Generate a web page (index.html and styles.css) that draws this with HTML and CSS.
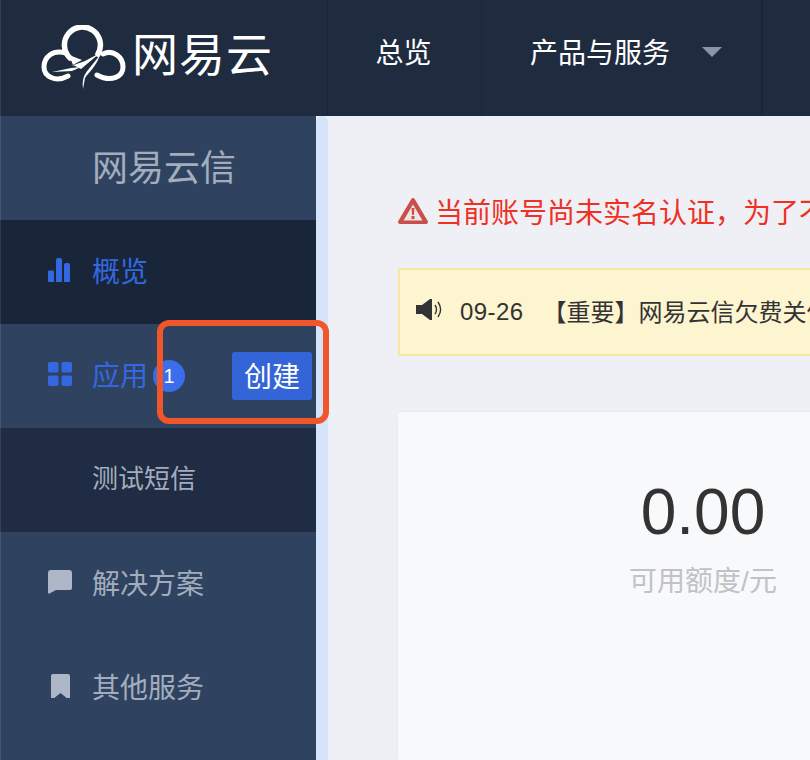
FILE: index.html
```html
<!DOCTYPE html>
<html lang="zh-CN">
<head>
  <meta charset="utf-8">
  <title>网易云信</title>
  <link rel="stylesheet" href="styles.css">
</head>
<body>
  <header class="topbar">
    <a class="logo">
      <svg class="logo-mark" width="88" height="66" viewBox="40 20 88 66">
        <g fill="none" stroke="#fff" stroke-linecap="round">
          <path stroke-width="5.500" d="M70 53A18 18 0 1 1 98 49"/>
          <path stroke-width="5" d="M66 48C53 44 44 52 44 62C44 71 55 78 68 71"/>
          <path stroke-width="5" d="M103 49C113 44 123 52 123 62C123 71 112 78 97 70"/>
        </g>
        <g fill="#fff">
          <path d="M69 50L82 55L71 61L85 56L100 48L81 64L73 60Z"/>
          <path d="M52 67L71 63L81 62L72 66Z"/>
          <path d="M100 50C96 62 88 68 85 73L83 84C82 74 84 70 88 65C92 60 96 55 100 50Z"/>
        </g>
      </svg>
      <span class="logo-text">网易云</span>
    </a>
    <a class="nav-item nav-home">总览</a>
    <a class="nav-item nav-products">产品与服务<i class="caret"></i></a>
    <a class="nav-item"></a>
  </header>

  <div class="layout">
    <aside class="sidebar">
      <div class="menu">
        <div class="menu-title">网易云信</div>
        <a class="menu-item active">
          <svg class="menu-icon" viewBox="0 0 24 24"><path d="M0 13.500a1 1 0 0 1 1-1h4a1 1 0 0 1 1 1V24H1a1 1 0 0 1-1-1zM8 2a2 2 0 0 1 2-2h2a2 2 0 0 1 2 2V24H8zM16 7a2 2 0 0 1 2-2h2a2 2 0 0 1 2 2v16a1 1 0 0 1-1 1h-5z"/></svg>
          <span>概览</span>
        </a>
        <a class="menu-item open">
          <svg class="menu-icon" viewBox="0 0 24 24"><rect width="10.500" height="10.500" rx="2"/><rect x="13.500" width="10.500" height="10.500" rx="2"/><rect y="13.500" width="10.500" height="10.500" rx="2"/><rect x="13.500" y="13.500" width="10.500" height="10.500" rx="2"/></svg>
          <span>应用</span>
          <b class="badge">1</b>
          <button class="create-btn" type="button">创建</button>
        </a>
        <a class="menu-item sub">测试短信</a>
        <a class="menu-item grey">
          <svg class="menu-icon" viewBox="0 0 24 24"><path d="M3 0h18a3 3 0 0 1 3 3v15a2 2 0 0 1-2 2H8l-6.500 3.500A1 1 0 0 1 0 22.500V3a3 3 0 0 1 3-3z"/></svg>
          <span>解决方案</span>
        </a>
        <a class="menu-item grey">
          <svg class="menu-icon" viewBox="0 0 24 24"><path d="M5 0h15a2 2 0 0 1 2 2v23a.8.8 0 0 1-1.300.6L12.500 19l-8.200 6.600A.8.8 0 0 1 3 25V2a2 2 0 0 1 2-2z"/></svg>
          <span>其他服务</span>
        </a>
      </div>
      <div class="scroll-thumb"></div>
      <div class="highlight"></div>
    </aside>

    <main class="content">
      <p class="warning">
        <svg class="warning-icon" width="30" height="26" viewBox="0 0 30 26">
          <path fill="#c9504a" d="M15 0a2 2 0 0 1 1.700 1L29.700 23a2 2 0 0 1-1.700 3H2a2 2 0 0 1-1.700-3L13.300 1A2 2 0 0 1 15 0z"/>
          <path fill="#f0e4e4" d="M15 6.500L24.500 22.500H5.500z"/>
          <path fill="#c9504a" d="M13.500 10h3l-.6 7h-1.800zM13.500 18h3v3h-3z"/>
        </svg>
        当前账号尚未实名认证，为了不影响您的正常使用，请尽快完成实名认证
      </p>
      <div class="notice">
        <svg class="notice-icon" width="26" height="22" viewBox="0 0 26 22">
          <path fill="#333" d="M0 6h6l8-6h2v21h-2l-8-6H0z"/>
          <path fill="none" stroke="#333" stroke-width="1.400" d="M19 6c2 3 2 6 0 9M22 3c3.500 5 3.500 10 0 15"/>
        </svg>
        <span class="notice-date">09-26</span>
        <span class="notice-text">【重要】网易云信欠费关停通知</span>
      </div>
      <section class="balance-card">
        <div class="amount">0.00</div>
        <div class="amount-label">可用额度/元</div>
      </section>
    </main>
  </div>
</body>
</html>
```

FILE: styles.css
```css
* {
  box-sizing: border-box;
}

html,
body {
  margin: 0;
  height: 100%;
}

body {
  display: flex;
  flex-direction: column;
  height: 760px;
  overflow: hidden;
  background: #eff0f5;
  color: #333;
  font-family: "Liberation Sans", "Noto Sans CJK SC", sans-serif;
}

/* thin light line down the left window edge */
body::after {
  content: "";
  position: absolute;
  left: 0;
  top: 0;
  width: 1px;
  height: 760px;
  background: rgba(255, 255, 255, 0.1);
}

/* top bar */
.topbar {
  display: flex;
  flex: none;
  height: 116px;
  background: #1f2c40;
}

.logo {
  display: flex;
  align-items: center;
  width: 328px;
  padding: 0 0 6px 40px;
  border-right: 1px solid #19263a;
}

.logo-mark {
  flex: none;
  margin: 6px 4px 0 0;
}

.logo-text {
  color: #fff;
  font-size: 46px;
  letter-spacing: 1px;
  line-height: 1;
  white-space: nowrap;
}

.nav-item {
  display: flex;
  align-items: center;
  padding-bottom: 14px;
  border-right: 1px solid #19263a;
  color: #fff;
  font-size: 28px;
  white-space: nowrap;
}

.nav-home {
  justify-content: center;
  width: 154px;
  padding-right: 2px;
}

.nav-products {
  width: 280px;
  padding-left: 48px;
}

.caret {
  width: 0;
  height: 0;
  margin: 2px 0 0 32px;
  border-top: 10px solid #8a94a6;
  border-left: 10px solid transparent;
  border-right: 10px solid transparent;
}

/* left menu */
.layout {
  display: flex;
  flex: 1;
  min-height: 0;
}

.sidebar {
  position: relative;
  display: flex;
  flex: none;
  width: 328px;
  background: #eff0f5;
}

.menu {
  width: 316px;
  background: #2f4361;
}

.scroll-thumb {
  width: 12px;
  background: #d6e4fb;
  border-radius: 6px 6px 0 0;
}

.menu-title {
  height: 104px;
  padding-left: 92px;
  color: #a3adbd;
  font-size: 36px;
  line-height: 105px;
}

.menu-item {
  display: flex;
  align-items: center;
  height: 104px;
  padding-left: 48px;
  color: #a3adbd;
  font-size: 28px;
  white-space: nowrap;
}

.menu-item span {
  margin: -4px 0 0 -1px;
}

.menu-icon {
  flex: none;
  width: 24px;
  height: 24px;
  margin: -4px 21px 0 0;
  fill: #3468e0;
}

.menu-item.active {
  background: #19263a;
  color: #3468e0;
}

.menu-item.open {
  color: #3468e0;
}

.menu-item.sub {
  padding: 0 0 8px 92px;
  background: #1f2c43;
  font-size: 26px;
}

.menu-item.grey .menu-icon {
  fill: #aeb7c8;
}

.badge {
  display: flex;
  align-items: center;
  justify-content: center;
  width: 32px;
  height: 32px;
  margin-left: 5px;
  border-radius: 50%;
  background: #3a6eec;
  color: #fff;
  font-size: 20px;
  font-weight: normal;
}

.create-btn {
  width: 80px;
  height: 48px;
  margin-left: 47px;
  padding: 0 0 3px;
  border: none;
  border-radius: 3px;
  background: #3465d8;
  color: #fff;
  font-family: inherit;
  font-size: 28px;
}

.highlight {
  position: absolute;
  left: 157px;
  top: 204px;
  width: 172px;
  height: 104px;
  border: 6px solid #f0562a;
  border-radius: 12px;
}

/* main area */
.content {
  flex: 1;
  min-width: 0;
  overflow: hidden;
  padding: 0 0 0 70px;
}

.warning {
  display: flex;
  align-items: center;
  height: 40px;
  margin: 75px 0 37px;
  color: #ee3124;
  font-size: 28px;
  white-space: nowrap;
}

.warning-icon {
  flex: none;
  margin-right: 7px;
}

.notice {
  display: flex;
  align-items: center;
  width: 610px;
  height: 88px;
  padding-left: 16px;
  border: 2px solid #f8e7a3;
  background: #fdf4d0;
  font-size: 24px;
  white-space: nowrap;
}

.notice-icon {
  flex: none;
  margin: -4px 18px 0 0;
}

.notice-date {
  margin-right: 19px;
  letter-spacing: 0.4px;
}

.notice-text {
  margin-top: -4px;
}

.balance-card {
  width: 610px;
  height: 348px;
  margin-top: 56px;
  padding-top: 60px;
  background: #f8f9fb;
  border-radius: 4px 4px 0 0;
  box-shadow: 0 0 3px rgba(0, 0, 0, 0.06);
  text-align: center;
}

.amount {
  font-size: 64px;
  line-height: 80px;
}

.amount-label {
  margin-top: 10px;
  color: #c0c2c7;
  font-size: 28px;
  line-height: 40px;
}
```
